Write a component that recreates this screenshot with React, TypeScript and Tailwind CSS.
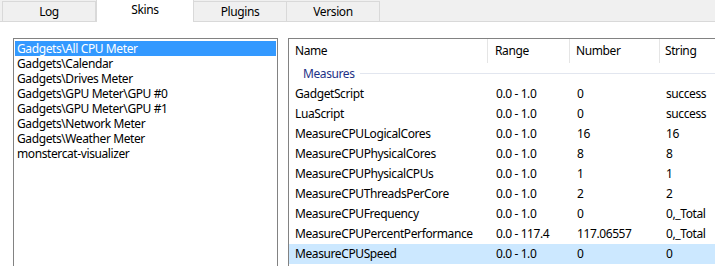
const TABS = ['Log', 'Skins', 'Plugins', 'Version']

const SKINS = [
  'Gadgets\\All CPU Meter',
  'Gadgets\\Calendar',
  'Gadgets\\Drives Meter',
  'Gadgets\\GPU Meter\\GPU #0',
  'Gadgets\\GPU Meter\\GPU #1',
  'Gadgets\\Network Meter',
  'Gadgets\\Weather Meter',
  'monstercat-visualizer',
]

const MEASURES = [
  ['GadgetScript', '0.0 - 1.0', '0', 'success'],
  ['LuaScript', '0.0 - 1.0', '0', 'success'],
  ['MeasureCPULogicalCores', '0.0 - 1.0', '16', '16'],
  ['MeasureCPUPhysicalCores', '0.0 - 1.0', '8', '8'],
  ['MeasureCPUPhysicalCPUs', '0.0 - 1.0', '1', '1'],
  ['MeasureCPUThreadsPerCore', '0.0 - 1.0', '2', '2'],
  ['MeasureCPUFrequency', '0.0 - 1.0', '0', '0,_Total'],
  ['MeasureCPUPercentPerformance', '0.0 - 117.4', '117.06557', '0,_Total'],
  ['MeasureCPUSpeed', '0.0 - 1.0', '0', '0'],
]

export default function App() {
  return (
    <div className="w-[715px] h-[266px] overflow-hidden bg-white text-[12px] tracking-[-0.4px] text-black font-['Noto_Sans',sans-serif]">
      {/* tab strip */}
      <div className="flex h-[22px] bg-[#f0f0f0] border-b border-[#d9d9d9] pl-[2px]">
        {TABS.map(t =>
          t === 'Skins' ? (
            <div key={t} className="w-[98px] h-[22px] -mb-px bg-white border-x border-[#d9d9d9] flex justify-center pt-[2px] leading-[16px]">
              {t}
            </div>
          ) : (
            <div key={t} className="w-[94px] h-[20px] mt-[1px] border border-[#d9d9d9] border-b-0 -ml-px first:ml-0 flex items-center justify-center leading-[16px]">
              {t}
            </div>
          )
        )}
      </div>

      <div className="flex pt-[16px]">
        {/* skins list */}
        <div className="ml-[13px] w-[265px] h-[240px] border border-[#828282] border-b-0 p-[1px] pt-[2px]">
          {SKINS.map((s, i) => (
            <div key={s} className={`h-[15px] leading-[15px] pl-[2px] ${i === 0 ? 'bg-[#3399ff] text-white' : ''}`}>
              {s}
            </div>
          ))}
        </div>

        {/* measures table */}
        <div className="ml-[10px] flex-1 border-t border-l border-[#828282]">
          <div className="flex h-[24px] items-center">
            <div className="w-[199px] pl-[6px] border-r border-[#e5e5e5] h-full flex items-center">Name</div>
            <div className="w-[82px] pl-[7px] border-r border-[#e5e5e5] h-full flex items-center">Range</div>
            <div className="w-[90px] pl-[6px] border-r border-[#e5e5e5] h-full flex items-center">Number</div>
            <div className="flex-1 pl-[5px] h-full flex items-center">String</div>
          </div>
          <div className="flex items-center h-[21px] pl-[14px] gap-[5px]">
            <span className="text-[#1e3287]">Measures</span>
            <div className="flex-1 h-px bg-[#e2e6ef]" />
          </div>
          {MEASURES.map((m, i) => (
            <div key={m[0]} className={`flex h-[20px] items-center ${i === MEASURES.length - 1 ? 'bg-[#cce8ff]' : ''}`}>
              <div className="w-[199px] pl-[6px]">{m[0]}</div>
              <div className="w-[82px] pl-[8px]">{m[1]}</div>
              <div className="w-[90px] pl-[7px]">{m[2]}</div>
              <div className="flex-1 pl-[6px]">{m[3]}</div>
            </div>
          ))}
        </div>
      </div>
    </div>
  )
}
